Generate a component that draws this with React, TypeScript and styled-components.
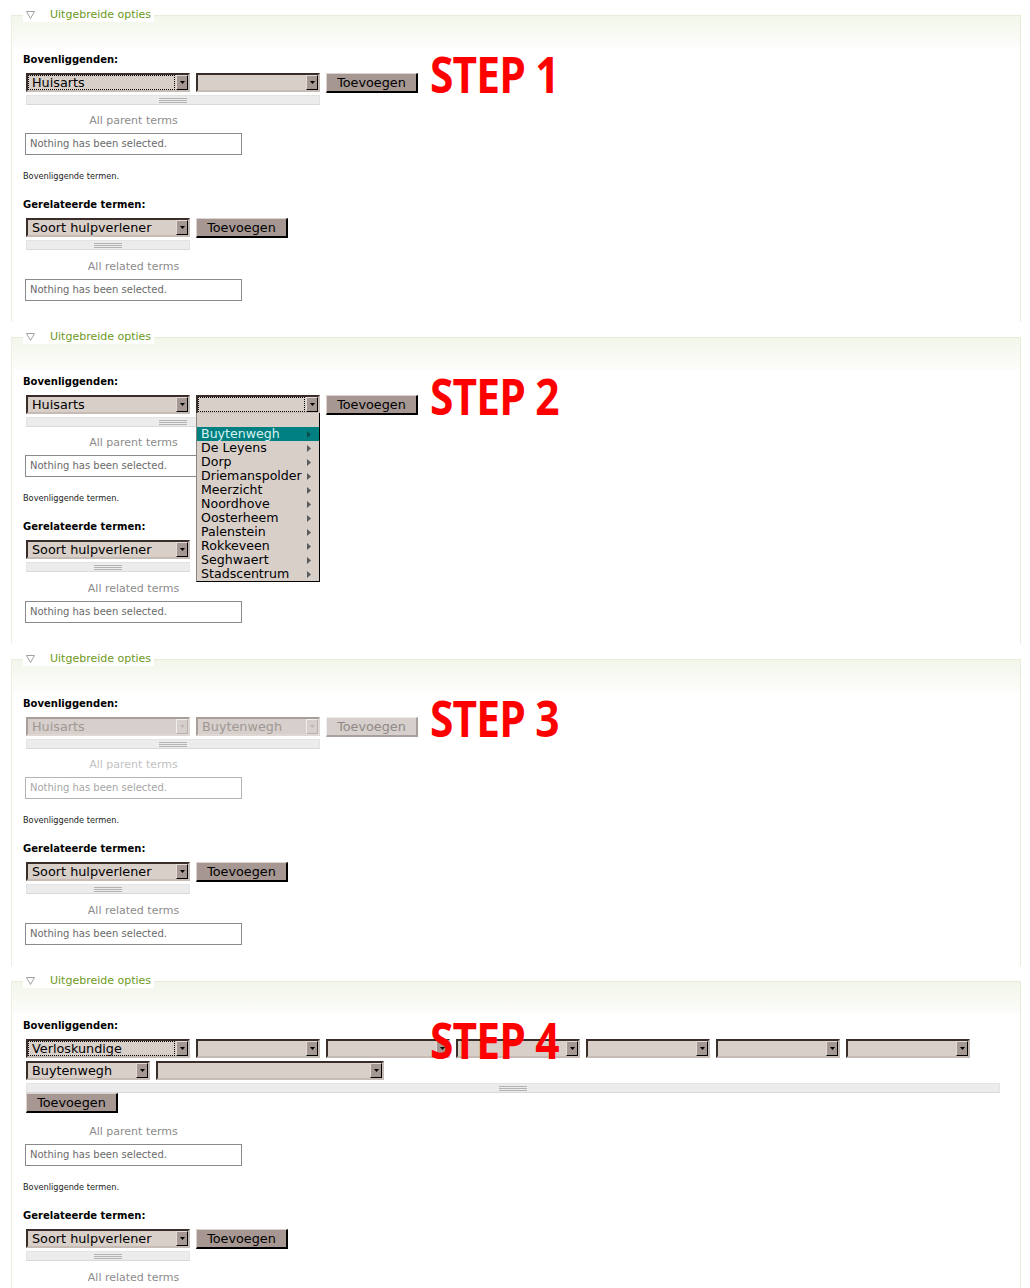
import styled, {createGlobalStyle, css} from 'styled-components';

const GlobalStyle = createGlobalStyle`
  html, body {
    margin: 0;
    padding: 0;
    background: #fff;
  }
  body {
    font-family: "DejaVu Sans", Verdana, sans-serif;
    color: #000;
  }
`;

type SelectSpec = {
  value?: string;
  width: number;
  focused?: boolean;
};

type StepSpec = {
  label: string;
  parentRows: SelectSpec[][];
  widgetWidth: number;
  disabled?: boolean;
  open?: boolean;
};

const places = [
  'Buytenwegh', 'De Leyens', 'Dorp', 'Driemanspolder', 'Meerzicht', 'Noordhove',
  'Oosterheem', 'Palenstein', 'Rokkeveen', 'Seghwaert', 'Stadscentrum',
];

const steps: StepSpec[] = [
  {
    label: 'STEP 1',
    parentRows: [[{value: 'Huisarts', width: 164, focused: true}, {width: 124}]],
    widgetWidth: 294,
  },
  {
    label: 'STEP 2',
    parentRows: [[{value: 'Huisarts', width: 164}, {width: 124, focused: true}]],
    widgetWidth: 294,
    open: true,
  },
  {
    label: 'STEP 3',
    parentRows: [[{value: 'Huisarts', width: 164}, {value: 'Buytenwegh', width: 124}]],
    widgetWidth: 294,
    disabled: true,
  },
  {
    label: 'STEP 4',
    parentRows: [
      [
        {value: 'Verloskundige', width: 164, focused: true},
        {width: 124}, {width: 124}, {width: 124}, {width: 124}, {width: 124}, {width: 124},
      ],
      [{value: 'Buytenwegh', width: 124}, {width: 228}],
    ],
    widgetWidth: 974,
  },
];

function Select({spec, disabled, open}: {spec: SelectSpec; disabled?: boolean; open?: boolean}) {
  return (
    <SelectBox $disabled={disabled} style={{width: spec.width}}>
      <SelectText $focused={spec.focused}>{spec.value}</SelectText>
      <ArrowButton $disabled={disabled}>
        <svg width="5" height="3" viewBox="0 0 5 3">
          <path d="M0 0H5L2.5 3Z" fill={disabled ? '#bdb5b1' : '#000'}/>
        </svg>
      </ArrowButton>
      {open && (
        <DropList>
          <DropItem/>
          {places.map((p, i) => (
            <DropItem key={p} $active={i === 0}>
              {p}
              <svg width="4" height="7" viewBox="0 0 4 7">
                <path d="M0 0L4 3.5L0 7Z" fill={i === 0 ? '#0c4b4b' : '#5a5a5a'}/>
              </svg>
            </DropItem>
          ))}
        </DropList>
      )}
    </SelectBox>
  );
}

function Panel({step}: {step: StepSpec}) {
  return (
    <PanelWrap>
      <Fieldset>
        <Legend>
          <svg width="9" height="8" viewBox="0 0 9 8">
            <path d="M0.5 0.5H8.5L4.5 7.5Z" fill="none" stroke="#a0a0a0" strokeWidth="1"/>
          </svg>
          <span>Uitgebreide opties</span>
        </Legend>

        <Heading>Bovenliggenden:</Heading>
        <TermRow>
          <Widget style={{width: step.widgetWidth}}>
            {step.parentRows.map((row, i) => (
              <SelectLine key={i}>
                {row.map((s, j) => (
                  <Select key={j} spec={s} disabled={step.disabled} open={step.open && j === 1}/>
                ))}
              </SelectLine>
            ))}
            <Grip/>
          </Widget>
          <AddButton $disabled={step.disabled}>Toevoegen</AddButton>
        </TermRow>
        <ListLabel $disabled={step.disabled}>All parent terms</ListLabel>
        <SelectedBox $disabled={step.disabled}>Nothing has been selected.</SelectedBox>
        <Description>Bovenliggende termen.</Description>

        <Heading $spaced>Gerelateerde termen:</Heading>
        <TermRow>
          <Widget style={{width: 164}}>
            <SelectLine>
              <Select spec={{value: 'Soort hulpverlener', width: 164}}/>
            </SelectLine>
            <Grip/>
          </Widget>
          <AddButton>Toevoegen</AddButton>
        </TermRow>
        <ListLabel $lower>All related terms</ListLabel>
        <SelectedBox>Nothing has been selected.</SelectedBox>
      </Fieldset>
      <StepLabel>{step.label}</StepLabel>
    </PanelWrap>
  );
}

export default function App() {
  return (
    <Page>
      <GlobalStyle/>
      {steps.map(s => <Panel key={s.label} step={s}/>)}
    </Page>
  );
}

const Page = styled.div`
  width: 1030px;
  padding: 0 9px 0 11px;
  box-sizing: border-box;
  display: flex;
  flex-direction: column;
`;

const PanelWrap = styled.div`
  position: relative;
  height: 322px;
  padding-top: 8px;
  box-sizing: border-box;
`;

const Fieldset = styled.fieldset`
  margin: 0;
  padding: 32px 11px 0;
  min-width: 0;
  height: 100%;
  box-sizing: border-box;
  border: 1px solid #e6eddb;
  border-bottom: none;
  border-left-color: #ecefe4;
  background: linear-gradient(#f2f6ea, #fbfcf8 28px, #fff 34px);
`;

const Legend = styled.legend`
  display: flex;
  align-items: center;
  gap: 15px;
  padding: 0 3px;
  margin: 0;
  height: 14px;
  font-size: 11px;
  line-height: 14px;
  color: #6d9a22;
  background: #fff;
`;

const Heading = styled.div<{$spaced?: boolean}>`
  font-size: 10px;
  font-weight: bold;
  line-height: 12px;
  margin: 0 0 7px;

  ${({$spaced}) => $spaced && css`
    margin-top: 18px;
  `}
`;

const TermRow = styled.div`
  display: flex;
  flex-wrap: wrap;
  align-items: flex-start;
  column-gap: 6px;
  padding-left: 3px;
`;

const Widget = styled.div`
  display: flex;
  flex-direction: column;
  gap: 3px;
`;

const SelectLine = styled.div`
  display: flex;
  gap: 6px;
`;

const SelectBox = styled.div<{$disabled?: boolean}>`
  position: relative;
  display: flex;
  align-items: center;
  height: 19px;
  box-sizing: border-box;
  border: 2px solid;
  border-color: #3a2c29 #c7bbb5 #c7bbb5 #3a2c29;
  background: #d8cfc9;
  font-size: 12.8px;
  color: #000;

  ${({$disabled}) => $disabled && css`
    border-color: #a99d98 #ded7d3 #ded7d3 #a99d98;
    background: #d6cfcb;
    color: #a09894;
  `}
`;

const SelectText = styled.div<{$focused?: boolean}>`
  flex: 1;
  height: 15px;
  line-height: 15px;
  padding-left: 4px;
  white-space: nowrap;
  overflow: hidden;
  box-sizing: border-box;
  margin-right: 1px;
  outline: ${({$focused}) => ($focused ? '1px dotted #000' : 'none')};
  outline-offset: -1px;
`;

const ArrowButton = styled.div<{$disabled?: boolean}>`
  width: 12px;
  height: 15px;
  box-sizing: border-box;
  display: flex;
  align-items: center;
  justify-content: center;
  background: #a59792;
  border: 1px solid;
  border-color: #e2dbd7 #000 #000 #e2dbd7;

  ${({$disabled}) => $disabled && css`
    background: #d6cfcb;
    border-color: #eee #b9b1ad #b9b1ad #eee;
  `}
`;

const DropList = styled.div`
  position: absolute;
  top: 16px;
  left: -2px;
  right: -2px;
  z-index: 2;
  background: #d8cfc9;
  border: 1px solid #000;
  border-left-color: #8c8480;
  border-top: none;
`;

const DropItem = styled.div<{$active?: boolean}>`
  display: flex;
  align-items: center;
  justify-content: space-between;
  height: 14px;
  line-height: 14px;
  padding: 0 8px 0 4px;
  font-size: 12.6px;
  color: #000;
  white-space: nowrap;

  ${({$active}) => $active && css`
    background: #008080;
    color: #d9f2f2;
  `}
`;

const Grip = styled.div`
  height: 10px;
  box-sizing: border-box;
  background: #ececec;
  border: 1px solid #e4e4e4;
  border-bottom-color: #d9d9d9;
  display: flex;
  align-items: center;
  justify-content: center;

  &::after {
    content: '';
    width: 28px;
    height: 5px;
    background: repeating-linear-gradient(#b3b3b3 0 1px, transparent 1px 2px);
  }
`;

const AddButton = styled.button<{$disabled?: boolean}>`
  height: 20px;
  width: 92px;
  margin: 0 0 3px;
  padding: 0;
  box-sizing: border-box;
  font-family: "DejaVu Sans", Verdana, sans-serif;
  font-size: 12.8px;
  color: #000;
  background: #a69792;
  border: solid;
  border-width: 1px 2px 2px 1px;
  border-color: #dcd3cf #000 #000 #dcd3cf;
  border-radius: 0;

  ${({$disabled}) => $disabled && css`
    background: #d6cfcb;
    color: #8f8a87;
    border-color: #eee #a8a09c #a8a09c #eee;
  `}
`;

const ListLabel = styled.div<{$disabled?: boolean; $lower?: boolean}>`
  width: 217px;
  margin-top: ${({$lower}) => ($lower ? '10px' : '9px')};
  padding-left: 2px;
  font-size: 11px;
  line-height: 14px;
  text-align: center;
  color: ${({$disabled}) => ($disabled ? '#c2c2c2' : '#8c8c8c')};
`;

const SelectedBox = styled.div<{$disabled?: boolean}>`
  width: 217px;
  height: 22px;
  margin: 5px 0 0 2px;
  box-sizing: border-box;
  border: 1px solid ${({$disabled}) => ($disabled ? '#b4b4b4' : '#8a8a8a')};
  padding-left: 4px;
  font-size: 10px;
  line-height: 20px;
  color: ${({$disabled}) => ($disabled ? '#a6a6a6' : '#6a6a6a')};
  background: #fff;
`;

const Description = styled.div`
  margin-top: 16px;
  font-size: 8.2px;
  line-height: 10px;
  color: #222;
`;

const StepLabel = styled.div`
  position: absolute;
  left: 419px;
  top: 49px;
  font-family: "Open Sans", "Liberation Sans", sans-serif;
  font-weight: 700;
  font-size: 50px;
  line-height: 51px;
  letter-spacing: -1px;
  color: #ff0000;
  transform: scaleX(0.85);
  transform-origin: left top;
  white-space: nowrap;
  pointer-events: none;
`;
